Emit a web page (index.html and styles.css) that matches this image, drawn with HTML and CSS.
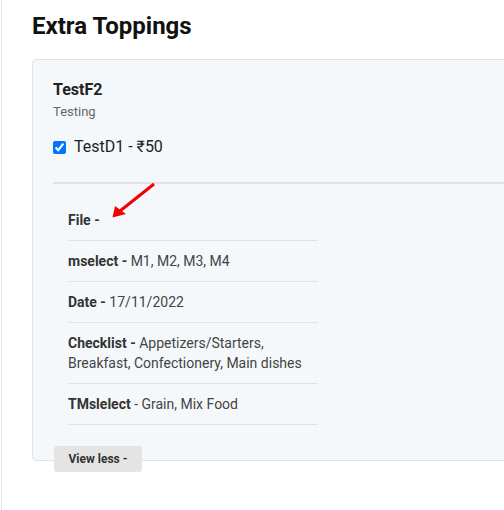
FILE: index.html
```html
<!DOCTYPE html>
<html>
<head>
<meta charset="utf-8">
<link rel="stylesheet" href="styles.css">
</head>
<body>
<div class="viewport">
  <div class="page">
    <h1 class="title">Extra Toppings</h1>
    <div class="card">
      <div class="item-name">TestF2</div>
      <div class="item-desc">Testing</div>
      <label class="option"><input type="checkbox" checked> <span>TestD1 - ₹50</span></label>
      <div class="divider"></div>
      <ul class="details">
        <li><b>File -</b></li>
        <li><b>mselect -</b> M1, M2, M3, M4</li>
        <li><b>Date -</b> 17/11/2022</li>
        <li><b>Checklist -</b> Appetizers/Starters, Breakfast, Confectionery, Main dishes</li>
        <li><b>TMslelect</b> - Grain, Mix Food</li>
      </ul>
    </div>
    <button class="toggle">View less -</button>
    <svg class="arrow" width="60" height="50" viewBox="100 178 60 50">
      <line x1="153" y1="184" x2="119" y2="211" stroke="#f00000" stroke-width="3"/>
      <polygon points="111.5,217.5 114,206 125,214" fill="#f00000"/>
    </svg>
  </div>
</div>
</body>
</html>
```

FILE: styles.css
```css
html, body {
  margin: 0;
  padding: 0;
  background: #fff;
}
body {
  font-family: Roboto, "Liberation Sans", Arial, sans-serif;
  color: #333;
}
.viewport {
  width: 504px;
  height: 510px;
  overflow: hidden;
}
.page {
  position: relative;
  margin-left: 1px;
  border-left: 1px solid #e6e6e6;
  padding-left: 30px;
  padding-top: 11px;
  width: 700px;
  height: 520px;
  box-sizing: border-box;
}
.title {
  margin: 0;
  font-size: 24px;
  line-height: 30px;
  font-weight: 700;
  color: #111;
}
.card {
  margin-top: 18px;
  background: #f5f8fb;
  border: 1px solid #e1e3e5;
  border-radius: 4px;
  padding: 20px 20px 35px 20px;
  width: 620px;
}
.item-name {
  font-size: 16px;
  font-weight: 700;
  line-height: 20px;
  color: #222;
}
.item-desc {
  font-size: 13px;
  line-height: 18px;
  color: #666;
  margin-top: 3px;
}
.option {
  display: flex;
  align-items: center;
  gap: 8px;
  margin-top: 15px;
  font-size: 16px;
  line-height: 22px;
  color: #222;
}
.option input {
  margin: 0;
  width: 13px;
  height: 13px;
}
.divider {
  margin-top: 24px;
  height: 2px;
  background: #e3e3e3;
}
.details {
  list-style: none;
  margin: 16px 0 0 15px;
  padding: 0;
  width: 250px;
}
.details li {
  padding: 10px 0;
  border-bottom: 1px solid #e3e3e3;
  font-size: 14px;
  line-height: 20px;
  color: #444;
}
.details b {
  color: #333;
}
.toggle {
  display: block;
  margin: -15px 0 0 22px;
  width: 88px;
  height: 26px;
  border: none;
  border-radius: 3px;
  background: #e4e4e4;
  font-family: Roboto, "Liberation Sans", Arial, sans-serif;
  font-size: 12px;
  font-weight: 700;
  color: #333;
  padding: 0;
  position: relative;
}
.arrow {
  position: absolute;
  left: 99px;
  top: 178px;
}
```
